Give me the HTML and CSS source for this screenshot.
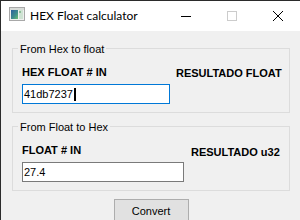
FILE: index.html
```html
<!DOCTYPE html>
<html>
<head>
<meta charset="utf-8">
<title>HEX Float calculator</title>
<link rel="stylesheet" href="styles.css">
</head>
<body>
<div class="window">
  <div class="titlebar">
    <svg class="app-icon" width="16" height="14" viewBox="0 0 16 14">
      <defs>
        <linearGradient id="pane" x1="0" y1="0" x2="1" y2="1">
          <stop offset="0" stop-color="#2b5f9e"/>
          <stop offset="0.6" stop-color="#3f8f8a"/>
          <stop offset="1" stop-color="#6cc070"/>
        </linearGradient>
      </defs>
      <rect x="0.5" y="0.5" width="15" height="13" fill="#eef0ee" stroke="#a8a8a8"/>
      <rect x="1" y="1" width="14" height="2" fill="#d8dcd8"/>
      <rect x="2" y="3" width="7" height="9" fill="url(#pane)"/>
      <rect x="10" y="3" width="4" height="9" fill="#cfe3d3"/>
      <rect x="10" y="4" width="2" height="2" fill="#8fbf9a"/>
    </svg>
    <span class="title">HEX Float calculator</span>
    <div class="controls">
      <span class="ctl">
        <svg width="10" height="10" viewBox="0 0 10 10"><path d="M0 5.5H10" stroke="#000" stroke-width="1"/></svg>
      </span>
      <span class="ctl">
        <svg width="10" height="10" viewBox="0 0 10 10"><rect x="0.5" y="0.5" width="9" height="9" fill="none" stroke="#cccccc" stroke-width="1"/></svg>
      </span>
      <span class="ctl">
        <svg width="10" height="10" viewBox="0 0 10 10"><path d="M0 0L10 10M10 0L0 10" stroke="#000" stroke-width="1"/></svg>
      </span>
    </div>
  </div>
  <div class="client">
    <fieldset class="group">
      <legend class="legend">From Hex to float</legend>
      <div class="row">
        <div class="field">
          <div class="label">HEX FLOAT # IN</div>
          <div class="textbox focused hex-box">41db7237<span class="caret"></span></div>
        </div>
        <div class="result result-float">RESULTADO FLOAT</div>
      </div>
    </fieldset>
    <fieldset class="group group-second">
      <legend class="legend">From Float to Hex</legend>
      <div class="row">
        <div class="field">
          <div class="label">FLOAT # IN</div>
          <div class="textbox float-box">27.4</div>
        </div>
        <div class="result result-u32">RESULTADO u32</div>
      </div>
    </fieldset>
    <div class="actions">
      <button class="btn" type="button">Convert</button>
    </div>
  </div>
</div>
</body>
</html>
```

FILE: styles.css
```css
html, body {
  margin: 0;
  padding: 0;
  overflow: hidden;
  background: #f0f0f0;
}

body {
  font-family: "Liberation Sans", Arial, sans-serif;
  color: #000;
}

.window {
  width: 300px;
  height: 219px;
  overflow: hidden;
  border-top: 1px solid #2b2b2b;
  border-left: 1px solid #2b2b2b;
  border-right: 1px solid #2b2b2b;
  background: #f0f0f0;
}

.titlebar {
  height: 30px;
  background: #ffffff;
  display: flex;
  align-items: center;
}

.app-icon {
  display: block;
  margin-left: 8px;
  margin-bottom: 4px;
  flex: none;
}

.title {
  margin-left: 5px;
  font-family: Lato, "Liberation Sans", sans-serif;
  font-size: 12px;
  line-height: 16px;
  color: #000;
}

.controls {
  margin-left: auto;
  display: flex;
  height: 30px;
}

.ctl {
  width: 46px;
  height: 30px;
  display: flex;
  align-items: center;
  justify-content: center;
}

.ctl svg {
  display: block;
}

.client {
  padding: 10px 11px 0 11px;
}

.group {
  margin: 0;
  padding: 0 0 8px 0;
  border: 1px solid #dcdcdc;
  min-width: 0;
}

.group-second {
  margin-top: 6px;
}

.legend {
  margin-left: 5px;
  padding: 2px 2px 0 2px;
  font-size: 11px;
  line-height: 12px;
}

.row {
  display: flex;
  align-items: flex-start;
  padding-left: 9px;
  margin-top: 11px;
}

.field {
  display: flex;
  flex-direction: column;
}

.label {
  font-weight: bold;
  font-size: 11px;
  line-height: 13px;
}

.textbox {
  box-sizing: border-box;
  margin-top: 5px;
  height: 20px;
  border: 1px solid #7a7a7a;
  background: #ffffff;
  padding-left: 1px;
  font-size: 11px;
  line-height: 18px;
  white-space: nowrap;
}

.focused {
  border-color: #0078d7;
}

.hex-box {
  width: 148px;
}

.float-box {
  width: 162px;
}

.caret {
  display: inline-block;
  width: 2px;
  height: 13px;
  margin-left: 1px;
  background: #000;
  vertical-align: -3px;
}

.result {
  font-weight: bold;
  font-size: 11px;
  line-height: 13px;
  white-space: nowrap;
}

.result-float {
  margin-left: 6px;
  margin-top: 1px;
}

.result-u32 {
  margin-left: 7px;
  margin-top: 2px;
}

.actions {
  display: flex;
  justify-content: center;
  margin-top: 8px;
}

.btn {
  width: 75px;
  height: 23px;
  margin: 0;
  padding: 0;
  border: 1px solid #adadad;
  border-radius: 0;
  background: #e1e1e1;
  font-family: "Liberation Sans", Arial, sans-serif;
  font-size: 11px;
  color: #000;
}
```
